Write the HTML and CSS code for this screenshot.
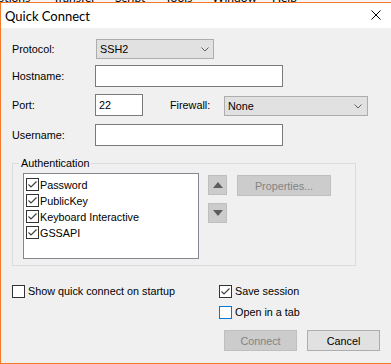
FILE: index.html
```html
<!DOCTYPE html>
<html lang="en">
<head>
  <meta charset="UTF-8">
  <title>Quick Connect</title>
  <link rel="stylesheet" href="styles.css">
</head>
<body>

<!-- menu of the main window behind the dialog -->
<div class="menubar">
  <div class="menu-text">
    <span class="m m1">Options</span><span class="m m2">Transfer</span><span class="m m3">Script</span><span class="m m4">Tools</span><span class="m m5">Window</span><span class="m">Help</span>
  </div>
</div>

<div class="window">
  <div class="titlebar">
    <span class="title">Quick Connect</span>
    <svg class="close" width="10" height="10" viewBox="0 0 10 10">
      <path d="M0.5 0.5L9.5 9.5M9.5 0.5L0.5 9.5" stroke="#000" stroke-width="1" fill="none"/>
    </svg>
  </div>

  <div class="content">
    <div class="row r1">
      <label class="lbl">Protocol:</label>
      <div class="select proto">
        <span>SSH2</span>
        <svg width="8" height="5" viewBox="0 0 8 5"><polyline points="0.5,0.5 4,4 7.5,0.5" stroke="#606060" fill="none"/></svg>
      </div>
    </div>
    <div class="row r2">
      <label class="lbl">Hostname:</label>
      <div class="input wide"></div>
    </div>
    <div class="row r3">
      <label class="lbl">Port:</label>
      <div class="input port">22</div>
      <label class="lbl fw">Firewall:</label>
      <div class="select firewall">
        <span>None</span>
        <svg width="8" height="5" viewBox="0 0 8 5"><polyline points="0.5,0.5 4,4 7.5,0.5" stroke="#606060" fill="none"/></svg>
      </div>
    </div>
    <div class="row r4">
      <label class="lbl">Username:</label>
      <div class="input wide"></div>
    </div>

    <fieldset class="group">
      <legend>Authentication</legend>
      <div class="group-body">
        <div class="listbox">
          <div class="item"><span class="cb on"><svg width="11" height="11" viewBox="0 0 11 11"><polyline points="1.5,5.5 4,8 9.5,2.5" stroke="#404040" stroke-width="1.2" fill="none"/></svg></span>Password</div>
          <div class="item"><span class="cb on"><svg width="11" height="11" viewBox="0 0 11 11"><polyline points="1.5,5.5 4,8 9.5,2.5" stroke="#404040" stroke-width="1.2" fill="none"/></svg></span>PublicKey</div>
          <div class="item"><span class="cb on"><svg width="11" height="11" viewBox="0 0 11 11"><polyline points="1.5,5.5 4,8 9.5,2.5" stroke="#404040" stroke-width="1.2" fill="none"/></svg></span>Keyboard Interactive</div>
          <div class="item"><span class="cb on"><svg width="11" height="11" viewBox="0 0 11 11"><polyline points="1.5,5.5 4,8 9.5,2.5" stroke="#404040" stroke-width="1.2" fill="none"/></svg></span>GSSAPI</div>
        </div>
        <div class="arrows">
          <div class="sq"><span class="tri up"></span></div>
          <div class="sq"><span class="tri down"></span></div>
        </div>
        <button class="btn disabled props">Properties...</button>
      </div>
    </fieldset>

    <div class="options">
      <div class="opt-left">
        <div class="check"><span class="cb"></span>Show quick connect on startup</div>
      </div>
      <div class="opt-right">
        <div class="check"><span class="cb on"><svg width="11" height="11" viewBox="0 0 11 11"><polyline points="1.5,5.5 4,8 9.5,2.5" stroke="#404040" stroke-width="1.2" fill="none"/></svg></span>Save session</div>
        <div class="check second"><span class="cb hover"></span>Open in a tab</div>
        <div class="buttons">
          <button class="btn disabled">Connect</button>
          <button class="btn">Cancel</button>
        </div>
      </div>
    </div>
  </div>
</div>

</body>
</html>
```

FILE: styles.css
```css
body {
  margin: 0;
  overflow: hidden;
  background: #f0f0f0;
  font-family: "Liberation Sans", Arial, sans-serif;
  font-size: 10.8px;
  color: #000;
}
.menubar {
  height: 2px;
  overflow: hidden;
  background: #f5f5f5;
}
.menu-text {
  margin-top: -8px;
  margin-left: -12px;
  font-family: Lato, sans-serif;
  font-size: 12px;
  line-height: 12px;
  white-space: nowrap;
}
.m { display: inline-block; }
.m1 { width: 65px; }
.m2 { width: 62px; }
.m3 { width: 50px; }
.m4 { width: 47px; }
.m5 { width: 60px; }

.window {
  box-sizing: border-box;
  height: 362px;
  border-top: 1px solid #f47a2a;
  border-left: 1px solid #f47a2a;
  border-bottom: 1px solid #f47a2a;
  background: #f0f0f0;
}
.titlebar {
  height: 25px;
  background: #fff;
  display: flex;
  align-items: center;
  padding: 0 10px 0 4px;
}
.title {
  font-family: Lato, sans-serif;
  font-size: 13px;
  flex: 1;
}
.close { margin-top: -1px; }

.content { padding-left: 11px; }
.row {
  display: flex;
  align-items: center;
}
.r1 { margin-top: 11px; height: 20px; }
.r2 { margin-top: 6px; height: 22px; }
.r3 { margin-top: 7px; height: 22px; }
.r4 { margin-top: 8px; height: 22px; }
.lbl { width: 83px; }
.lbl.fw { width: 54px; margin-left: 27px; }

.input {
  box-sizing: border-box;
  height: 22px;
  border: 1px solid #7a7a7a;
  background: #fff;
  padding: 3px 3px;
  line-height: 14px;
}
.input.wide { width: 188px; }
.input.port { width: 48px; }

.select {
  box-sizing: border-box;
  height: 20px;
  border: 1px solid #adadad;
  background: #e1e1e1;
  display: flex;
  align-items: center;
  justify-content: space-between;
  padding: 0 4px 0 3px;
}
.select.proto { width: 118px; margin-left: 1px; }
.select.firewall { width: 144px; margin-top: 2px; padding-right: 5px; }

.group {
  box-sizing: border-box;
  width: 344px;
  margin: 10px 0 0 0;
  padding: 0;
  border: 1px solid #dcdcdc;
}
.group legend {
  margin-left: 6px;
  padding: 0 2px;
  line-height: 14px;
}
.group-body {
  display: flex;
  align-items: flex-start;
  padding: 3px 0 6px 10px;
}
.listbox {
  box-sizing: border-box;
  width: 176px;
  height: 86px;
  border: 1px solid #828790;
  background: #fff;
  padding: 3px 0 0 2px;
}
.item {
  display: flex;
  align-items: flex-start;
  height: 16px;
  line-height: 16px;
}
.item .cb { margin-top: 1px; margin-right: 1px; }

.cb {
  box-sizing: border-box;
  width: 13px;
  height: 13px;
  border: 1px solid #333;
  background: #fff;
  flex: none;
  display: flex;
}
.cb.hover { border-color: #0078d7; }

.arrows {
  margin: 2px 0 0 9px;
  display: flex;
  flex-direction: column;
  gap: 8px;
}
.sq {
  box-sizing: border-box;
  width: 19px;
  height: 20px;
  background: #cccccc;
  border: 1px solid #bfbfbf;
  display: flex;
  align-items: center;
  justify-content: center;
}
.tri {
  width: 0;
  height: 0;
  border-left: 5px solid transparent;
  border-right: 5px solid transparent;
}
.tri.up { border-bottom: 6px solid #5d5d5d; }
.tri.down { border-top: 6px solid #5d5d5d; }

.btn {
  box-sizing: border-box;
  width: 73px;
  height: 21px;
  margin: 0;
  padding: 0;
  font-family: "Liberation Sans", Arial, sans-serif;
  font-size: 10.8px;
  color: #000;
  background: #e1e1e1;
  border: 1px solid #adadad;
}
.btn.disabled {
  color: #838383;
  background: #cccccc;
  border-color: #bfbfbf;
}
.btn.props { width: 94px; margin: 2px 0 0 10px; }

.options {
  display: flex;
  margin-top: 19px;
}
.opt-left { width: 207px; }
.check {
  display: flex;
  align-items: center;
  height: 13px;
  line-height: 13px;
}
.check .cb { margin-right: 3px; }
.check.second { margin-top: 8px; }
.buttons {
  display: flex;
  gap: 10px;
  margin: 11px 0 0 5px;
}
```
